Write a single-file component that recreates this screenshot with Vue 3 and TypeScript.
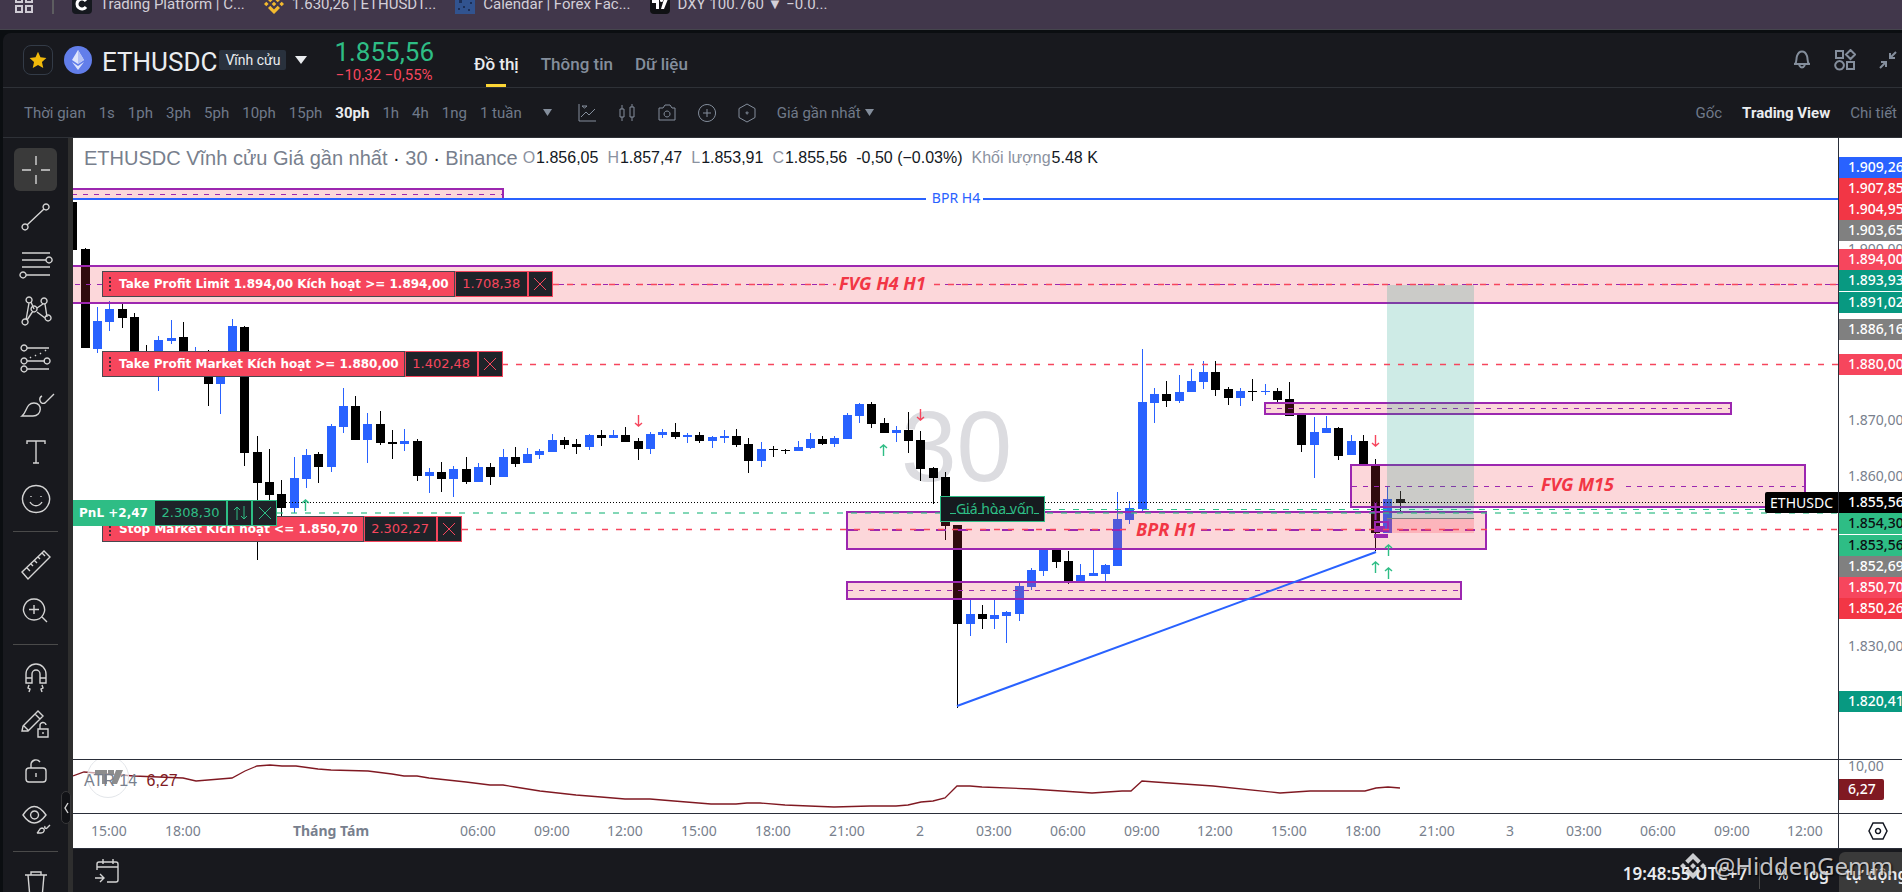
<script setup lang="ts">
type Row = [number, number, number, number, number]

const bookmarks = [
  { icon: 'c', label: 'Trading Platform | C...' },
  { icon: 'bnb', label: '1.630,26 | ETHUSDT...' },
  { icon: 'cal', label: 'Calendar | Forex Fac...' },
  { icon: 'tv', label: 'DXY 100.760 ▼ −0.0...' },
]
const frames = ['1s', '1ph', '3ph', '5ph', '10ph', '15ph', '30ph', '1h', '4h', '1ng', '1 tuần']

// high, body top, body bottom, low, rising (1) or falling (0)
const rows: Row[] = [
  [200, 202, 250, 262, 0], [248, 249, 348, 348, 0], [307, 321, 349, 353, 1], [301, 309, 322, 331, 1],
  [304, 309, 318, 328, 0], [313, 317, 360, 360, 0], [345, 352, 360, 360, 0], [336, 340, 360, 391, 1],
  [320, 338, 341, 344, 1], [322, 337, 360, 360, 0], [347, 351, 360, 360, 1], [350, 351, 384, 406, 0],
  [360, 365, 384, 414, 1], [319, 326, 360, 360, 1], [326, 327, 453, 466, 0], [436, 452, 483, 560, 0],
  [449, 482, 495, 503, 0], [480, 494, 508, 518, 0], [457, 478, 508, 513, 1], [449, 455, 479, 488, 1],
  [452, 454, 467, 483, 0], [424, 426, 467, 472, 1], [388, 406, 427, 433, 1], [396, 406, 440, 440, 0],
  [413, 424, 440, 463, 1], [411, 424, 443, 445, 0], [430, 442, 444, 459, 0], [429, 441, 444, 451, 1],
  [439, 441, 476, 481, 0], [468, 472, 476, 493, 1], [462, 472, 479, 492, 0], [466, 469, 479, 497, 1],
  [457, 469, 482, 484, 0], [463, 467, 482, 482, 1], [463, 467, 477, 485, 0], [449, 457, 477, 477, 1],
  [447, 457, 464, 467, 0], [448, 454, 463, 463, 1], [449, 451, 455, 459, 1], [434, 440, 452, 452, 1],
  [437, 440, 445, 449, 0], [439, 444, 447, 454, 0], [434, 435, 447, 450, 1], [430, 435, 438, 446, 0],
  [430, 435, 438, 438, 1], [427, 435, 442, 442, 0], [438, 441, 449, 460, 0], [432, 434, 449, 454, 1],
  [429, 432, 435, 438, 1], [423, 432, 437, 439, 0], [433, 435, 437, 443, 1], [432, 435, 441, 443, 0],
  [436, 437, 441, 448, 1], [430, 436, 438, 443, 1], [429, 436, 445, 447, 0], [438, 444, 461, 473, 0],
  [442, 449, 461, 467, 1], [446, 449, 450, 457, 0], [449, 450, 451, 454, 0], [441, 447, 451, 451, 1],
  [433, 439, 448, 449, 1], [436, 439, 444, 445, 0], [436, 438, 444, 447, 1], [413, 415, 439, 439, 1],
  [403, 404, 416, 423, 1], [402, 404, 424, 428, 0], [418, 423, 433, 433, 0], [426, 430, 433, 442, 1],
  [412, 430, 441, 453, 0], [431, 440, 469, 481, 0], [467, 468, 478, 504, 0], [472, 477, 526, 540, 0],
  [525, 525, 624, 708, 0], [599, 614, 624, 636, 1], [605, 614, 619, 629, 0], [599, 615, 619, 629, 1],
  [611, 612, 616, 643, 1], [582, 586, 614, 621, 1], [568, 570, 587, 590, 1], [549, 549, 571, 576, 1],
  [549, 549, 562, 568, 0], [551, 561, 581, 584, 0], [564, 575, 581, 581, 1], [549, 573, 576, 576, 1],
  [564, 565, 574, 581, 1], [492, 519, 566, 566, 1], [501, 508, 520, 524, 1], [349, 402, 509, 511, 1],
  [388, 394, 403, 423, 1], [381, 394, 401, 407, 0], [375, 392, 401, 403, 1], [369, 381, 392, 392, 1],
  [361, 372, 382, 389, 1], [361, 372, 390, 396, 0], [387, 389, 398, 405, 0], [388, 391, 398, 406, 1],
  [379, 391, 392, 401, 0], [384, 391, 392, 395, 1], [388, 391, 400, 402, 0], [382, 399, 416, 416, 0],
  [414, 414, 445, 452, 0], [417, 432, 445, 478, 1], [416, 428, 433, 433, 1], [427, 428, 456, 460, 0],
  [435, 441, 455, 455, 1], [435, 441, 464, 464, 0], [459, 465, 533, 551, 0], [486, 499, 533, 533, 1],
  [491, 499, 503, 511, 0],
]
const slotX = (slot: number): number => Math.round(109.3 + slot * 12.29)
const candles = rows.map(([high, top, bottom, low, up], i) => ({
  x: slotX(i - 3), high, top, bottom, low, color: up ? '#2962ff' : '#000000',
}))

const ticks = [
  [0, '15:00'], [6, '18:00'], [18, 'Tháng Tám'], [30, '06:00'], [36, '09:00'], [42, '12:00'], [48, '15:00'],
  [54, '18:00'], [60, '21:00'], [66, '2'], [72, '03:00'], [78, '06:00'], [84, '09:00'], [90, '12:00'],
  [96, '15:00'], [102, '18:00'], [108, '21:00'], [114, '3'], [120, '03:00'], [126, '06:00'], [132, '09:00'],
  [138, '12:00'],
].map(([slot, text]) => ({ x: slotX(Number(slot)), text: String(text) }))

// price tags on the scale: top edge, text, colour class
const tags = [
  { y: 157, t: '1.909,26', c: 'blue' }, { y: 178, t: '1.907,85', c: 'red' }, { y: 199, t: '1.904,95', c: 'red' },
  { y: 220, t: '1.903,65', c: 'grey' }, { y: 249, t: '1.894,00', c: 'rose' }, { y: 270, t: '1.893,93', c: 'teal' },
  { y: 292, t: '1.891,02', c: 'teal' }, { y: 319, t: '1.886,16', c: 'grey' }, { y: 354, t: '1.880,00', c: 'rose' },
  { y: 492, t: '1.855,56', c: 'black' }, { y: 513, t: '1.854,30', c: 'green' }, { y: 535, t: '1.853,56', c: 'green' },
  { y: 556, t: '1.852,69', c: 'grey' }, { y: 577, t: '1.850,70', c: 'rose' }, { y: 598, t: '1.850,26', c: 'red' },
  { y: 691, t: '1.820,41', c: 'teal' },
]
const scale = [
  { y: 239, t: '1.900,00' }, { y: 410, t: '1.870,00' }, { y: 466, t: '1.860,00' }, { y: 636, t: '1.830,00' },
]

const orders = [
  { y: 271, text: 'Take Profit Limit 1.894,00 Kích hoạt >= 1.894,00', qty: '1.708,38' },
  { y: 351, text: 'Take Profit Market Kích hoạt >= 1.880,00', qty: '1.402,48' },
  { y: 516, text: 'Stop Market Kích hoạt <= 1.850,70', qty: '2.302,27' },
]
const downs = [[638, 415], [920, 409], [1375, 435]]
const ups = [[305, 500], [883, 445], [1375, 562], [1388, 545], [1388, 568]]
const atr = '73,776 84,772 134,776 183,778 196,781 220,779 232,778 245,771 257,766 270,765 282,766 296,766 318,769 331,770 368,771 392,774 404,776 417,776 429,778 466,782 490,785 503,785 515,787 540,791 576,795 601,797 625,799 650,799 674,801 711,804 736,804 747,803 760,803 785,805 809,806 834,807 870,806 896,806 908,805 921,802 933,801 945,798 957,786 970,786 982,787 1031,789 1092,793 1122,791 1131,791 1142,781 1155,782 1213,786 1280,793 1310,791 1365,791 1376,788 1388,787 1400,788'

const tools = [
  { name: 'Con trỏ chữ thập', d: 'M16 2v9M16 21v9M2 16h9M21 16h9' },
  { name: 'Đường xu hướng', d: 'M7 24 24 8M5 23a3 3 0 1 0 .1 0zM26 3a3 3 0 1 0 .1 0z' },
  { name: 'Fibonacci', d: 'M2 5h28M2 12h24M2 19h28M6 27h24M29 9a3 3 0 1 0 .1 0zM3 24a3 3 0 1 0 .1 0z' },
  { name: 'Mẫu hình', d: 'M6 25 9 8M11 7l3 7M17 13l6-4M25 9l2 13M7 25l6-9M17 17l8 6M9 2a3 3 0 1 0 .1 0zM24 3a3 3 0 1 0 .1 0zM14 11a3 3 0 1 0 .1 0zM5 24a3 3 0 1 0 .1 0zM28 20a3 3 0 1 0 .1 0z' },
  { name: 'Dự báo', d: 'M7 6h22M7 19h18M7 27h22M4 3a3 3 0 1 0 .1 0zM4 16a3 3 0 1 0 .1 0zM27 16a3 3 0 1 0 .1 0zM4 24a3 3 0 1 0 .1 0zM10 16l1-1M15 14l1-1M20 12l1-1M25 9l1-1' },
  { name: 'Cọ vẽ', d: 'M2 27c5-4 4-13 12-13 9 0 8 13-1 13zM22 7c-4 2-2 9 3 7l9-9' },
  { name: 'Văn bản', d: 'M7 8V5h18v3M16 5v22M13 27h6' },
  { name: 'Biểu tượng', d: 'M16 2.500a13.500 13.500 0 1 0 .1 0zM10 19c3 5 9 5 12 0M11 13v1M21 13v1' },
  { name: 'divider', d: '' },
  { name: 'Thước đo', d: 'M2 23 24 2l6 6L8 30zM7 19l3 3M11 15l2 2M14 11l3 3M18 8l2 2M22 4l3 3' },
  { name: 'Phóng to', d: 'M14 3a10.500 10.500 0 1 0 .1 0zM14 9v9M9 13.500h10M22 21l5 5' },
  { name: 'divider', d: '' },
  { name: 'Nam châm', d: 'M6 21V12a10 10 0 0 1 20 0v9h-6V12a4 4 0 0 0-8 0v9zM6 16h6M20 16h6M9 23l-1 3 2 1-1 3M22 23l1 3-2 1 1 3' },
  { name: 'Khóa công cụ vẽ', d: 'M3 17 18 2l5 5L8 22H2zM15 5l5 5M4 17l4 4M18 20h10v8H18zM20 20v-3a3 3 0 0 1 6-1M23 23v2' },
  { name: 'Khóa hình vẽ', d: 'M9 12h14q3 0 3 3v8q0 3-3 3H9q-3 0-3-3v-8q0-3 3-3zM11 12V8a5 5 0 0 1 9-2M16 17v4' },
  { name: 'Ẩn hình vẽ', d: 'M3 12q11-17 23 0-12 16-23 0zM14.500 8a4 4 0 1 0 .1 0zM17 30c2-1 2-5 5-5 4 1 2 5-1 5zM25 23c-1 2 1 3 2 2l3-3' },
  { name: 'divider', d: '' },
  { name: 'Xóa', d: 'M5 6h22M11 6V3h10v3M8 6l2 23h12l2-23' },
]
</script>

<template>
  <div class="page">
    <nav class="bookmarks" aria-label="Dấu trang">
      <svg class="grid-ico" width="20" height="20" viewBox="0 0 20 20" fill="none" stroke="#cfcbd4" stroke-width="2"><path d="M2 2h6v6H2zM12 2h6v6h-6zM2 12h6v6H2zM12 12h6v6h-6z" /></svg>
      <i class="bm-sep"></i>
      <a v-for="b in bookmarks" :key="b.icon" href="#">
        <svg v-if="b.icon === 'c'" width="20" height="20" viewBox="0 0 20 20"><rect width="20" height="20" rx="4" fill="#15181e" /><path d="M14 7a5 5 0 1 0 0 6" fill="none" stroke="#fff" stroke-width="3" /></svg>
        <svg v-else-if="b.icon === 'bnb'" width="20" height="20" viewBox="0 0 20 20" fill="#f3ba2f"><path d="m10 0 6 6-2.300 2.300L10 4.600 6.300 8.300 4 6zM0 10l2.300-2.300L4.600 10l-2.300 2.300zM15.400 10l2.300-2.300L20 10l-2.300 2.300zM10 20l-6-6 2.300-2.300L10 15.400l3.700-3.700L16 14zM7.700 10 10 7.700 12.300 10 10 12.300z" /></svg>
        <svg v-else-if="b.icon === 'cal'" width="20" height="20" viewBox="0 0 20 20"><rect width="20" height="20" fill="#31538f" /><path d="M3 14h2v2H3zM8 12h2v2H8zM13 15h2v2h-2zM15 8h2v2h-2zM4 6h3v3H4z" fill="#1c2f57" /></svg>
        <svg v-else width="20" height="20" viewBox="0 0 20 20"><rect width="20" height="20" rx="4" fill="#101114" /><path d="M2 5h7v10H6V9H2zM14 5h4l-4 10h-3z" fill="#fff" /><circle cx="11.500" cy="6.500" r="1.500" fill="#fff" /></svg>
        <span>{{ b.label }}</span>
      </a>
    </nav>

    <div class="panel">
      <header class="head">
        <button class="star" aria-label="Yêu thích"><svg width="18" height="18" viewBox="0 0 24 24" fill="#f0b90b"><path d="m12 1 3.300 7.300 7.900.9-5.900 5.400 1.700 7.900L12 18.500 5 22.500l1.700-7.900L.8 9.200l7.900-.9z" /></svg></button>
        <svg class="eth" width="28" height="28" viewBox="0 0 28 28"><circle cx="14" cy="14" r="14" fill="#627eea" /><path d="m14 4 6 10-6 4-6-4z" fill="#dfe5fb" /><path d="m14 4 6 10-6 4z" fill="#b4c1f5" /><path d="m8 16 6 8 6-8-6 4z" fill="#dfe5fb" /></svg>
        <h1>ETHUSDC</h1>
        <span class="badge">Vĩnh cửu</span>
        <button class="caret" aria-label="Chọn cặp"><svg width="12" height="8" viewBox="0 0 12 8" fill="#eaecef"><path d="M0 0h12L6 8z" /></svg></button>
        <div class="quote"><b>1.855,56</b><span>−10,32 −0,55%</span></div>
        <nav class="tabs"><a class="on" href="#">Đồ thị</a><a href="#">Thông tin</a><a href="#">Dữ liệu</a></nav>
        <div class="head-icons">
          <button aria-label="Cảnh báo"><svg width="20" height="22" viewBox="0 0 20 22"><path d="M2 15h16M3 15c2-2 1-5 2-8 2-6 8-6 10 0 1 3 0 6 2 8M7 16q3 5 6 0" /></svg></button>
          <button aria-label="Bố cục"><svg width="22" height="22" viewBox="0 0 22 22"><path d="M2 2h7v7H2zM13 13h7v7h-7zM16.500 1 21 5.500 16.500 10 12 5.500zM5.500 12a4.300 4.300 0 1 0 .1 0z" /></svg></button>
          <button aria-label="Thu nhỏ"><svg width="20" height="20" viewBox="0 0 20 20"><path d="M18 2l-6 6M12 3v5h5M2 18l6-6M3 12h5v5" /></svg></button>
        </div>
      </header>

      <div class="bar">
        <span class="bar-label">Thời gian</span>
        <button v-for="f in frames" :key="f" :class="{ on: f === '30ph' }">{{ f }}</button>
        <button class="more" aria-label="Thêm khung"><svg width="9" height="7" viewBox="0 0 9 7" fill="#848e9c"><path d="M0 0h9L4.500 7z" /></svg></button>
        <div class="bar-icons">
          <button aria-label="Chỉ báo"><svg width="20" height="20" viewBox="0 0 20 20"><path d="M2 1v17h17M4 14l5-5 3 3 6-6M5 3h5L7.500 5z" /></svg></button>
          <button aria-label="Kiểu nến"><svg width="20" height="20" viewBox="0 0 20 20"><path d="M3 6h4v8H3zM5 2v4M5 14v4M13 4h4v10h-4zM15 1v3M15 14v4" /></svg></button>
          <button aria-label="Chụp ảnh"><svg width="20" height="20" viewBox="0 0 20 20"><path d="M2 5h4l2-3h5l2 3h3v12H2zM10 8a3 3 0 1 0 .1 0z" /></svg></button>
          <button aria-label="Thêm"><svg width="20" height="20" viewBox="0 0 20 20"><path d="M10 1.500a8.500 8.500 0 1 0 .1 0zM10 6v8M6 10h8" /></svg></button>
          <button aria-label="Cài đặt"><svg width="20" height="20" viewBox="0 0 20 20"><path d="m10 1 8 4.500v9L10 19l-8-4.500v-9zM10 9a1 1 0 1 0 .1 0z" /></svg></button>
        </div>
        <button class="price-type">Giá gần nhất <svg width="9" height="7" viewBox="0 0 9 7" fill="#848e9c"><path d="M0 0h9L4.500 7z" /></svg></button>
        <div class="views"><button>Gốc</button><button class="on">Trading View</button><button>Chi tiết</button></div>
      </div>

      <div class="body">
        <aside class="tools">
          <template v-for="(t, i) in tools" :key="i">
            <hr v-if="t.name === 'divider'" />
            <button v-else :class="{ on: i === 0 }" :aria-label="t.name"><svg width="32" height="32" viewBox="0 0 32 32"><path :d="t.d" /></svg></button>
          </template>
          <button class="fold" aria-label="Thu gọn"><svg width="6" height="12" viewBox="0 0 6 12"><path d="M5 1 2 6l3 5" /></svg></button>
        </aside>

        <main class="chart">
          <section class="pane">
            <div class="plot">
              <svg class="canvas" role="img" aria-label="Biểu đồ nến ETHUSDC">
                <g transform="translate(-73 -138)">
                  <text x="901" y="481" class="wm">30</text>
                  <g v-for="c in candles" :key="c.x" :fill="c.color">
                    <rect :x="c.x" :y="c.high" width="1" :height="c.low - c.high" />
                    <rect :x="c.x - 4" :y="c.top" width="9" :height="c.bottom - c.top" />
                  </g>
                  <g class="zone">
                    <rect x="60" y="189" width="443" height="10" />
                    <rect x="60" y="266" width="1800" height="37" />
                    <rect x="847" y="512" width="639" height="37" />
                    <rect x="847" y="582" width="614" height="17" />
                    <rect x="1265" y="403" width="466" height="11" />
                    <rect x="1351" y="465" width="454" height="42" />
                  </g>
                  <g class="mid">
                    <path d="M72 194.500H502M848 590.500H1460M1266 408.500H1731M1352 486.500H1535M1626 486.500H1804" />
                    <path d="M75 284.500H836M934 284.500H1838" />
                    <path class="thick" d="M848 530H1130M1201 530H1485" />
                  </g>
                  <path d="M73 199H926M983 199H1838" stroke="#2962ff" stroke-width="2" />
                  <text x="956" y="203" class="lbl blue">BPR H4</text>
                  <path d="M957 706 1376 552" stroke="#2962ff" stroke-width="2" />
                  <rect x="1387" y="285" width="87" height="233" fill="#089981" fill-opacity=".2" />
                  <rect x="1387" y="519" width="87" height="14" fill="#ff3b4e" fill-opacity=".22" />
                  <path d="M1387 518.500H1474" stroke="#808080" />
                  <path d="M1375.500 502v18M1375 522h13v9h-13z" fill="none" stroke="#9c27b0" stroke-width="2" />
                  <rect x="1375" y="526" width="10" height="5" fill="#9c27b0" />
                  <rect x="1374" y="534" width="14" height="4" fill="#9c27b0" />
                  <path d="M73 502.500H1766" stroke="#000" stroke-dasharray="1 2" />
                  <path class="sell" d="M553 284.500H836M934 284.500H1838M502 364.500H1838M462 529.500H1130M1201 529.500H1838" />
                  <path class="buy" d="M277 513H1838" />
                  <path class="buy thin" d="M1045 509.500H1838" />
                  <text x="839" y="290" class="ztext">FVG H4 H1</text>
                  <text x="1136" y="536" class="ztext">BPR H1</text>
                  <text x="1541" y="491" class="ztext">FVG M15</text>
                  <path v-for="(a, i) in downs" :key="'d' + i" :transform="`translate(${a[0]} ${a[1]})`" d="M.5 0v11M-3 8 .5 11 4 8" class="arrow dn" />
                  <path v-for="(a, i) in ups" :key="'u' + i" :transform="`translate(${a[0]} ${a[1]})`" d="M.5 11V0M-3 3 .5 0 4 3" class="arrow up" />
                </g>
              </svg>
              <div class="legend">
                <span class="sym">ETHUSDC Vĩnh cửu Giá gần nhất <em>·</em> 30 <em>·</em> Binance</span>
                <span>O<b>1.856,05</b></span><span>H<b>1.857,47</b></span><span>L<b>1.853,91</b></span><span>C<b>1.855,56</b></span>
                <b class="chg">-0,50 (−0.03%)</b><span>Khối lượng<b>5.48 K</b></span>
              </div>
              <div v-for="o in orders" :key="o.y" class="order" :style="{ top: o.y - 138 + 'px' }">
                <button class="name"><i></i>{{ o.text }}</button><button class="qty">{{ o.qty }}</button>
                <button class="x" aria-label="Hủy lệnh"><svg width="12" height="12" viewBox="0 0 12 12"><path d="M0 0l12 12M12 0 0 12" /></svg></button>
              </div>
              <div class="order pnl">
                <button class="name">PnL +2,47</button><button class="qty">2.308,30</button>
                <button class="x" aria-label="Đảo vị thế"><svg width="14" height="14" viewBox="0 0 14 14"><path d="M4 14V1M1 4l3-3 3 3M11 0v13M8 10l3 3 3-3" /></svg></button>
                <button class="x" aria-label="Đóng vị thế"><svg width="12" height="12" viewBox="0 0 12 12"><path d="M0 0l12 12M12 0 0 12" /></svg></button>
              </div>
              <span class="even">Giá hòa vốn</span>
              <span class="sym-tag">ETHUSDC</span>
            </div>
            <div class="axis">
              <span v-for="s in scale" :key="s.t" class="tick" :style="{ top: s.y - 138 + 'px' }">{{ s.t }}</span>
              <span v-for="t in tags" :key="t.t" class="tag" :class="t.c" :style="{ top: t.y - 138 + 'px' }">{{ t.t }}</span>
            </div>
          </section>

          <section class="pane atr">
            <div class="plot">
              <svg class="canvas" role="img" aria-label="ATR">
                <g transform="translate(-73 -760)">
                  <polyline :points="atr" fill="none" stroke="#801922" stroke-width="1.300" />
                  <circle cx="108" cy="777" r="20.500" fill="#fff" fill-opacity=".6" stroke="#e3e6ea" />
                  <path d="M95 770h12v14h-5v-9h-7zM116 770h7l-6 14h-6zM108 770h6v5h-6z" fill="#8d8d8d" />
                </g>
              </svg>
              <div class="atr-legend">ATR 14 <b>6,27</b></div>
            </div>
            <div class="axis"><span class="tick ten">10,00</span><span class="tag atr-tag">6,27</span></div>
          </section>

          <section class="pane time">
            <div class="plot">
              <svg class="canvas" role="img" aria-label="Trục thời gian">
                <text v-for="t in ticks" :key="t.x" :x="t.x - 73" y="22" :class="['lbl', { bold: t.text === 'Tháng Tám' }]">{{ t.text }}</text>
              </svg>
            </div>
            <div class="axis"><button class="gear" aria-label="Cài đặt trục"><svg width="20" height="18" viewBox="0 0 20 18"><path d="M5 1h10l4 8-4 8H5L1 9zM10 6.500a2.500 2.500 0 1 0 .1 0z" /></svg></button></div>
          </section>

          <footer class="foot">
            <button class="goto" aria-label="Đi đến ngày"><svg width="26" height="26" viewBox="0 0 26 26"><path d="M3 12V6q0-2 2-2h17q2 0 2 2v16q0 2-2 2h-9M3 9h21M9 1v5M19 1v5M1 20h9M6 16l4 4-4 4" /></svg></button>
            <button class="clock">19:48:55 UTC+7</button><i></i><button class="pct">%</button><button class="log">log</button><button class="auto">tự động</button>
            <div class="credit">
              <svg width="26" height="26" viewBox="0 0 20 20"><path d="m10 0 6 6-2.300 2.300L10 4.600 6.300 8.300 4 6zM0 10l2.300-2.300L4.600 10l-2.300 2.300zM15.400 10l2.300-2.300L20 10l-2.300 2.300zM10 20l-6-6 2.300-2.300L10 15.400l3.700-3.700L16 14zM7.700 10 10 7.700 12.300 10 10 12.300z" /></svg>
              <span>@HiddenGemm</span>
            </div>
          </footer>
        </main>
      </div>
    </div>
  </div>
</template>

<style>
body { background: #0b0e11; }
</style>

<style scoped>
* { box-sizing: border-box; }
button { border: 0; background: none; padding: 0; margin: 0; font: inherit; color: inherit; display: flex; align-items: center; justify-content: center; white-space: nowrap; }
a { color: inherit; text-decoration: none; }
.page { height: 100vh; display: flex; flex-direction: column; overflow: hidden; background: #0b0e11; font-family: Roboto, "Noto Sans", sans-serif; color: #848e9c; }

.bookmarks { flex: none; height: 30px; overflow: hidden; display: flex; align-items: center; padding: 0 0 22px 14px; background: #41374b; border-bottom: 1px solid #45454d; color: #d3cfd8; font-size: 15px; white-space: nowrap; }
.bookmarks svg { flex: none; }
.bookmarks .bm-sep { width: 2px; height: 20px; background: #5d5d60; margin: 0 18px 0 18px; }
.bookmarks a { display: flex; align-items: center; gap: 8px; margin-right: 19px; line-height: 20px; }

.panel { flex: 1; min-height: 0; margin: 3px 0 0 3px; border-radius: 8px 0 0 0; background: #18191e; display: flex; flex-direction: column; overflow: hidden; }
.head { flex: none; height: 55px; display: flex; align-items: center; padding: 0 4px 0 20px; border-bottom: 1px solid #2e3137; color: #eaecef; }
.star { width: 30px; height: 30px; border: 1px solid #333b47; border-radius: 8px; }
.eth { margin: 0 10px 0 11px; flex: none; }
h1 { margin: 4px 2px 0 0; font-size: 26px; font-weight: 400; line-height: 30px; }
.badge { height: 20px; padding: 0 6px; border-radius: 2px; background: #29313d; font-size: 14px; line-height: 20px; }
.caret { margin: 0 27px 0 9px; }
.quote { display: flex; flex-direction: column; align-items: center; }
.quote b { color: #2ebd85; font-size: 26px; font-weight: 400; line-height: 28px; margin-top: 2px; }
.quote span { color: #f6465d; font-size: 15px; line-height: 18px; }
.tabs { display: flex; gap: 22px; align-self: stretch; margin-left: 40px; font-size: 17px; font-weight: 500; color: #848e9c; }
.tabs a { position: relative; display: flex; align-items: center; padding-top: 8px; }
.tabs .on { color: #eaecef; }
.tabs .on::after { content: ""; position: absolute; left: 50%; bottom: 0; width: 20px; height: 3px; margin-left: -10px; background: #fcd535; }
.head-icons { margin-left: auto; display: flex; gap: 22px; }
.head-icons svg, .bar-icons svg { fill: none; stroke: #848e9c; stroke-width: 2; }
.bar-icons svg { stroke-width: 1; }

.bar { flex: none; height: 50px; display: flex; align-items: center; gap: 13px; padding: 0 5px 0 21px; border-bottom: 1px solid #2e3137; font-size: 15px; color: #707a8a; }
.bar .on { color: #eaecef; font-weight: 700; }
.more { margin: 0 12px 0 8px; }
.bar-icons { display: flex; gap: 20px; }
.price-type { gap: 4px; margin-left: 7px; }
.views { margin-left: auto; display: flex; gap: 20px; }

.body { flex: 1; min-height: 0; display: flex; }
.tools { position: relative; flex: none; width: 70px; border-right: 5px solid #2e2e2e; padding-top: 8px; display: flex; flex-direction: column; align-items: center; }
.tools button { flex: none; width: 43px; height: 43px; margin: 2px 0; border-radius: 6px; }
.tools button.on { background: #3a3a3a; }
.tools svg { fill: none; stroke: #d4d4d4; stroke-width: 1.4; overflow: visible; }
.tools hr { flex: none; width: 45px; height: 1px; margin: 9px 0; border: 0; background: #4a4a4a; }
.tools .fold { position: absolute; right: -3px; top: 653px; width: 10px; height: 33px; border: 1px solid #38383a; margin: 0; background: #111216; }

.chart { flex: 1; min-width: 0; display: flex; flex-direction: column; background: #fff; }
.pane { flex: 1; min-height: 0; display: flex; border-bottom: 1px solid #2a2e39; }
.pane.atr { flex: none; height: 54px; }
.pane.time { flex: none; height: 35px; }
.plot { position: relative; flex: 1; min-width: 0; overflow: hidden; }
.canvas { display: block; width: 100%; height: 100%; }
.axis { position: relative; flex: none; width: 64px; border-left: 1px solid #2a2e39; overflow: hidden; font: 14px/19px "Noto Sans", sans-serif; }
.tick, .tag { position: absolute; left: 0; padding-left: 9px; height: 21px; width: 80px; color: #787f8d; }
.tag { color: #fff; font-weight: 500; }
.blue { background: #2962ff; } .red { background: #f23645; } .grey { background: #808080; } .rose { background: #f6465d; }
.teal { background: #089981; } .black { background: #000; } .green { background: #2ebd85; color: #0b0e11; }
.ten { top: -4px; }
.atr-tag { top: 19px; width: 45px; background: #801922; border-radius: 0 2px 2px 0; }

.wm { font: 100px "Liberation Sans", sans-serif; fill: #dcdce0; }
.zone rect { fill: #f23645; fill-opacity: .2; stroke: #9c27b0; stroke-width: 2; }
.mid path { stroke: #9c27b0; stroke-dasharray: 5 6; }
.mid .thick { stroke-width: 2; stroke-dasharray: 10 12; }
.sell { stroke: #f6465d; stroke-width: 1.4; stroke-dasharray: 6 8; }
.buy { stroke: #2ebd85; stroke-width: 2; stroke-opacity: .6; stroke-dasharray: 6 8; }
.buy.thin { stroke-width: 1; stroke-opacity: 1; }
.lbl { font: 14px "Noto Sans", sans-serif; fill: #787f8d; text-anchor: middle; }
.lbl.blue { fill: #2962ff; }
.lbl.bold { font-weight: 700; }
.ztext { font: italic 700 18px "Noto Sans", sans-serif; fill: #f23645; }
.arrow { fill: none; stroke-width: 1.4; }
.dn { stroke: #f6465d; } .up { stroke: #2ebd85; }

.legend { position: absolute; left: 11px; top: 8px; display: flex; align-items: center; gap: 9px; font: 16px/24px "Liberation Sans", sans-serif; color: #8b92a0; white-space: nowrap; }
.legend .sym { font-size: 20px; margin-right: -4px; color: #787f8d; }
.legend b, .legend em { font-weight: 400; font-style: normal; color: #131722; }
.legend span b { padding-left: 1px; }
.order { position: absolute; left: 29px; height: 26px; display: flex; font: 13px/22px "DejaVu Sans", sans-serif; }
.order .name { padding: 0 5px 0 6px; background: #f6465d; color: #fff; border: 1px solid #48484f; font-size: 12px; font-weight: 700; }
.order .name i { width: 2px; height: 14px; margin-right: 8px; border-left: 2px dotted #4a2a35; }
.order .qty, .order .x { background: #1e2329; color: #f6465d; border: 1px solid currentColor; }
.order .qty { width: 73px; }
.order .x { width: 25px; }
.order svg { fill: none; stroke: currentColor; }
.pnl { left: 0; top: 362px; }
.pnl .name { width: 81px; padding: 0; background: #2ebd85; border-color: #2ebd85; }
.pnl .qty, .pnl .x { color: #2ebd85; }
.even { position: absolute; left: 867px; top: 358px; height: 26px; width: 105px; padding-left: 5px; text-align: center; background: #161a1f; border: 1px solid #2ebd85; color: #2ebd85; font: 14px/23px "Noto Sans", sans-serif; }
.even::after { content: ""; position: absolute; left: 9px; right: 5px; top: 16px; height: 1px; background: repeating-linear-gradient(90deg, #2ebd85 0 6px, transparent 6px 14px); }
.sym-tag { position: absolute; right: 0; top: 354px; height: 21px; padding: 0 5px; border-radius: 2px 0 0 2px; background: #000; color: #fff; font: 14px/21px "Noto Sans", sans-serif; }
.atr-legend { position: absolute; left: 11px; top: 9px; font: 16px/24px "Liberation Sans", sans-serif; color: #787f8d; }
.atr-legend b { margin-left: 5px; font-weight: 400; color: #801922; }
.gear { position: absolute; left: 29px; top: 8px; }
.gear svg { fill: none; stroke: #131722; stroke-width: 1.5; }

.foot { position: relative; flex: none; height: 43px; display: flex; align-items: center; padding-left: 21px; overflow: hidden; background: #18191e; color: #eaecef; font: 600 16px/20px "Noto Sans", sans-serif; }
.foot svg { fill: none; stroke: #d4d4d4; stroke-width: 1.4; }
.foot .clock { margin: 6px 12px 0 auto; font-size: 17px; }
.foot i { width: 1px; height: 26px; margin-top: 10px; background: #4a4a4a; }
.foot .pct { margin: 6px 16px 0 15px; font-weight: 400; }
.foot .log { margin: 6px 10px 0 0; }
.foot .auto { width: 63px; height: 40px; margin-top: 3px; padding: 4px 0 0 6px; justify-content: flex-start; overflow: hidden; border-radius: 6px 0 0 0; background: #3a3a3a; }
.foot .credit { position: absolute; right: 9px; top: 0; display: flex; align-items: center; gap: 8px; color: #d2d3d6; opacity: .9; font-size: 24px; font-weight: 400; line-height: 34px; text-shadow: 1px 1px 2px #000; }
.foot .credit svg { fill: #dfe1e4; stroke: none; }
</style>
